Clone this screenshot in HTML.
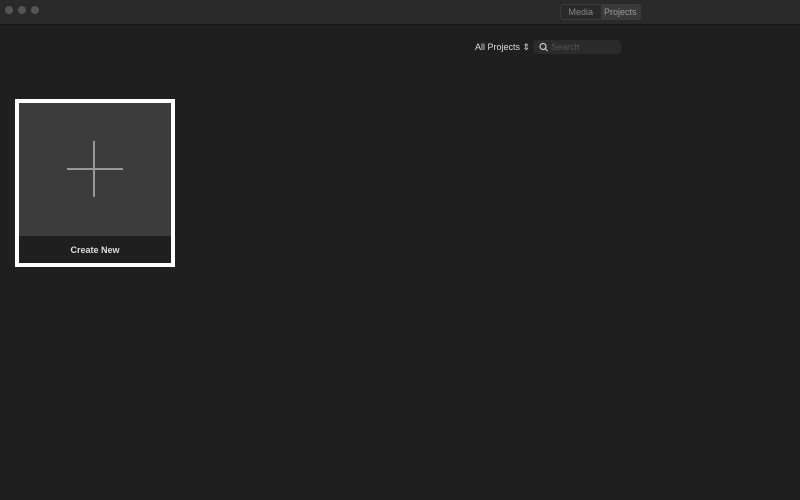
<!DOCTYPE html>
<html><head><style>
body{margin:0;width:800px;height:500px;background:#1f1f1f;font-family:"Liberation Sans",sans-serif;overflow:hidden;position:relative}
.tb{position:absolute;left:0;top:0;width:800px;height:24px;background:#2a2a2a;border-bottom:1px solid #191919}
.dot{position:absolute;top:6px;width:8px;height:8px;border-radius:50%;background:#555}
.seg{position:absolute;left:560px;top:4px;width:79px;height:14px;border:1px solid #3a3a3a;border-radius:3px;font-size:9px;color:#888;display:flex}
.seg div{flex:1;text-align:center;line-height:14px}
.seg .on{background:#3a3a3a;color:#999}
.ap{position:absolute;left:475px;top:42px;font-size:9px;color:#ddd}
.sr{position:absolute;left:533px;top:40px;width:88px;height:14px;background:#2b2b2b;border-radius:4px;font-size:9px;color:#555;line-height:14px}
.card{position:absolute;left:15px;top:99px;width:152px;height:160px;border:4px solid #fff;background:#3c3c3c}
.bar{position:absolute;left:0;bottom:0;width:152px;height:27px;background:#1f1f1f;color:#ddd;font-size:9px;font-weight:bold;text-align:center;line-height:28px}
.h{position:absolute;left:48px;top:65px;width:56px;height:2px;background:#999}
.v{position:absolute;left:74px;top:38px;width:2px;height:56px;background:#999}
</style></head><body>
<div class="tb">
<div class="dot" style="left:5px"></div><div class="dot" style="left:18px"></div><div class="dot" style="left:31px"></div>
<div class="seg"><div>Media</div><div class="on">Projects</div></div>
</div>
<div class="ap">All Projects ⇕</div>
<div class="sr"><svg width="14" height="14" style="position:absolute;left:4px;top:0"><circle cx="6" cy="6.5" r="3" fill="none" stroke="#ccc" stroke-width="1.2"/><line x1="8.2" y1="8.7" x2="10.5" y2="11" stroke="#ccc" stroke-width="1.2"/></svg><span style="position:absolute;left:18px">Search</span></div>
<div class="card"><div class="h"></div><div class="v"></div><div class="bar">Create New</div></div>
</body></html>
